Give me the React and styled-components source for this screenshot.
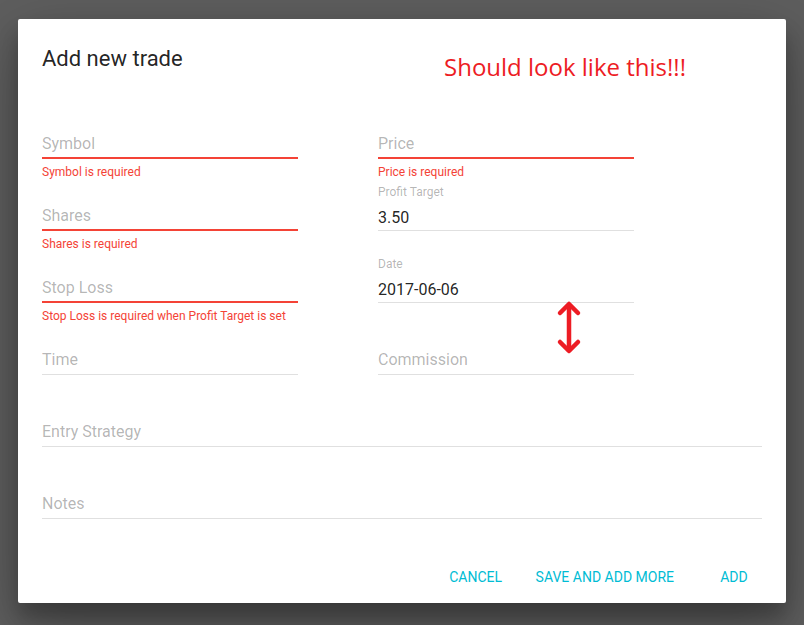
import React from 'react'
import styled, { createGlobalStyle } from 'styled-components'

const GlobalStyle = createGlobalStyle`
  html, body {
    margin: 0;
    padding: 0;
    background: #5e5e5e;
  }

  body {
    font-family: Roboto, "Liberation Sans", sans-serif;
  }
`

const Page = styled.div`
  width: 804px;
  height: 625px;
  box-sizing: border-box;
  padding: 19px 18px 22px;
  background: #5e5e5e;
`

const Dialog = styled.div`
  position: relative;
  width: 768px;
  height: 584px;
  background: #fff;
  border-radius: 2px;
  box-shadow: 0 19px 60px rgba(0, 0, 0, 0.3), 0 15px 20px rgba(0, 0, 0, 0.22);
  display: flex;
  flex-direction: column;
`

const Header = styled.div`
  display: flex;
  align-items: flex-start;
  padding: 24px 24px 0;
  height: 32px;
`

const Title = styled.h3`
  margin: 0;
  font-size: 22px;
  line-height: 32px;
  font-weight: 400;
  color: rgba(0, 0, 0, 0.87);
  width: 402px;
`

const Note = styled.span`
  font-family: "Open Sans", "Noto Sans", sans-serif;
  font-size: 24px;
  line-height: 32px;
  margin-top: 8px;
  color: #ed1c24;
`

const Body = styled.div`
  padding: 26px 24px 0;
  display: flex;
  flex-direction: column;
  flex: 1;
`

const Columns = styled.div`
  display: grid;
  grid-template-columns: 256px 256px;
  column-gap: 80px;
`

const Column = styled.div`
  display: flex;
  flex-direction: column;
`

const Field = styled.div`
  height: 72px;
  flex-shrink: 0;
`

const FloatLabel = styled.div`
  height: 28px;
  box-sizing: border-box;
  padding-top: 11px;
  font-size: 12px;
  line-height: 16px;
  color: rgba(0, 0, 0, 0.3);
`

const Input = styled.div`
  height: 30px;
  box-sizing: border-box;
  padding-top: ${p => (p.filled ? '5px' : '3px')};
  font-size: 16px;
  line-height: 24px;
  color: ${p => (p.filled ? 'rgba(0, 0, 0, 0.87)' : 'rgba(0, 0, 0, 0.3)')};
  border-bottom: ${p => (p.error ? '2px solid #f44336' : '1px solid #e0e0e0')};
`

const Helper = styled.div`
  padding-top: 5px;
  font-size: 12px;
  line-height: 16px;
  color: #f44336;
  white-space: nowrap;
`

const Actions = styled.div`
  display: flex;
  justify-content: flex-end;
  padding: 8px;
`

const Button = styled.button`
  min-width: 88px;
  height: 36px;
  padding: 0 16px;
  border: none;
  background: transparent;
  font-family: Roboto, "Liberation Sans", sans-serif;
  font-size: 14px;
  font-weight: 400;
  text-transform: uppercase;
  color: #00bcd4;
  cursor: pointer;
`

const Arrow = styled.svg`
  position: absolute;
  left: 537px;
  top: 281px;
`

const TextField = ({ label, value, placeholder, error }) => (
  <Field>
    <FloatLabel>{label}</FloatLabel>
    <Input filled={!!value} error={error}>{value || placeholder}</Input>
    {error && <Helper>{error}</Helper>}
  </Field>
)

const left = [
  { placeholder: 'Symbol', error: 'Symbol is required' },
  { placeholder: 'Shares', error: 'Shares is required' },
  { placeholder: 'Stop Loss', error: 'Stop Loss is required when Profit Target is set' },
  { placeholder: 'Time' },
]

const right = [
  { placeholder: 'Price', error: 'Price is required' },
  { label: 'Profit Target', value: '3.50' },
  { label: 'Date', value: '2017-06-06' },
  { placeholder: 'Commission' },
]

const App = () => (
  <Page>
    <GlobalStyle />
    <Dialog>
      <Header>
        <Title>Add new trade</Title>
        <Note>Should look like this!!!</Note>
      </Header>
      <Body>
        <Columns>
          <Column>
            {left.map(f => <TextField key={f.placeholder} {...f} />)}
          </Column>
          <Column>
            {right.map(f => <TextField key={f.placeholder || f.label} {...f} />)}
          </Column>
        </Columns>
        <TextField placeholder="Entry Strategy" />
        <TextField placeholder="Notes" />
      </Body>
      <Actions>
        <Button>Cancel</Button>
        <Button>Save and add more</Button>
        <Button>Add</Button>
      </Actions>
      <Arrow width="28" height="56" viewBox="0 0 28 56">
        <g fill="none" stroke="#ed1c24" strokeWidth="4.5" strokeLinecap="round" strokeLinejoin="round">
          <path d="M14 5 V50" />
          <path d="M5 13 L14 4 L23 13" />
          <path d="M5 42 L14 51 L23 42" />
        </g>
      </Arrow>
    </Dialog>
  </Page>
)

export default App
